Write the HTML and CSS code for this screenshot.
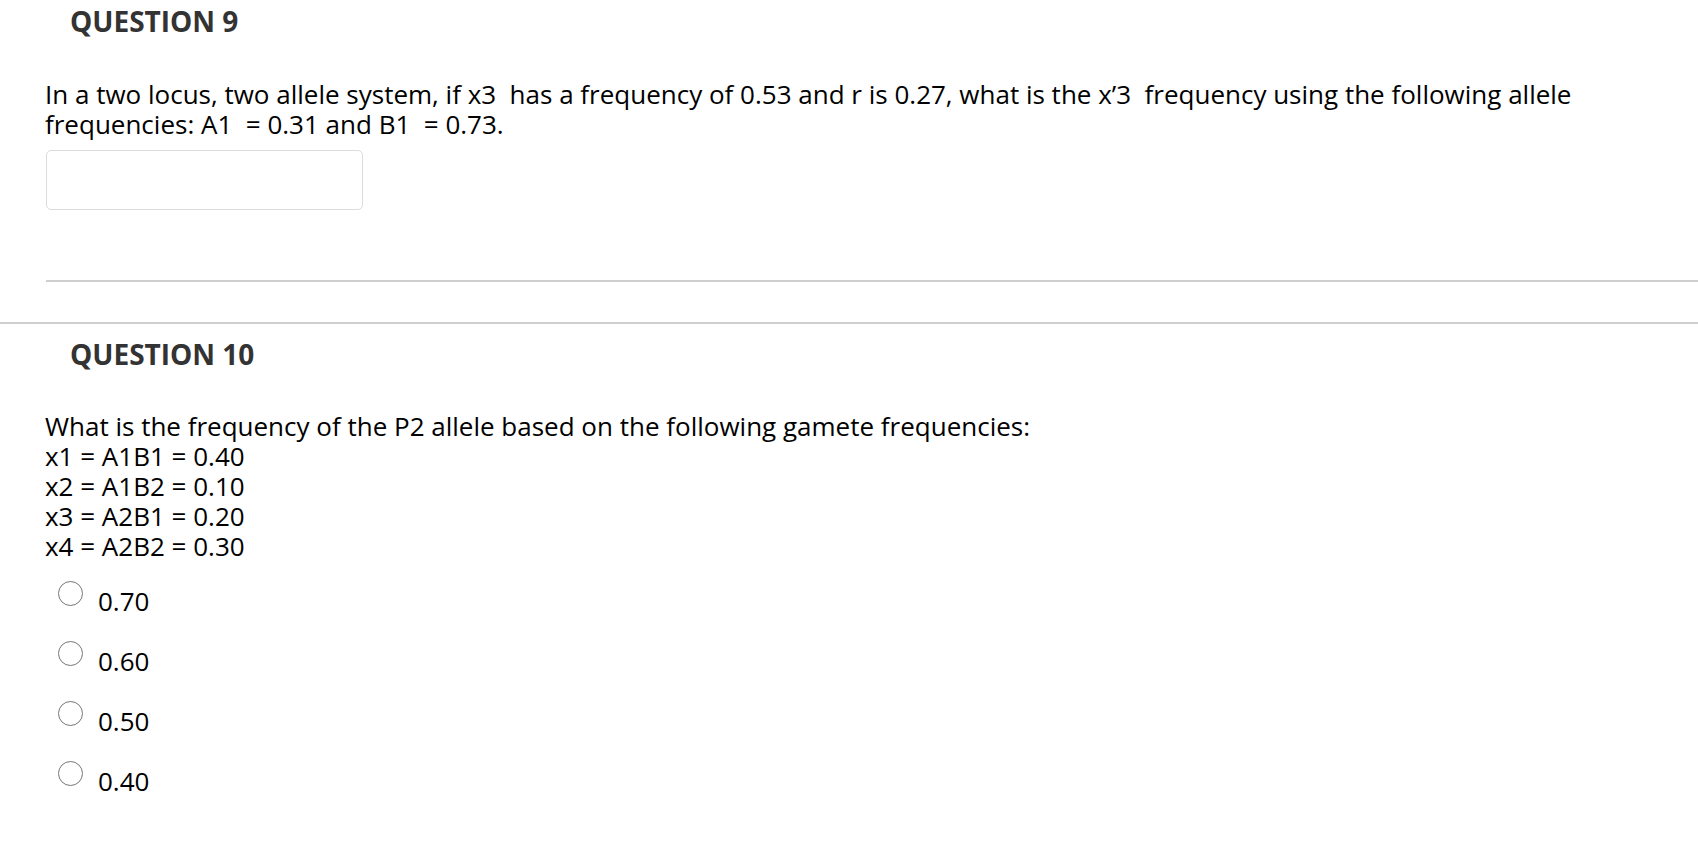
FILE: index.html
```html
<!DOCTYPE html>
<html>
<head>
<meta charset="utf-8">
<link rel="stylesheet" href="styles.css">
</head>
<body>
<div class="page">
  <section class="question q9">
    <h2 class="qtitle">QUESTION 9</h2>
    <div class="qtext">
      <p>In a two locus, two allele system, if x3&nbsp; has a frequency of 0.53 and r is 0.27, what is the x’3&nbsp; frequency using the following allele frequencies: A1&nbsp; = 0.31 and B1&nbsp; = 0.73.</p>
    </div>
    <div class="answer-box"></div>
    <div class="inner-rule"></div>
  </section>
  <div class="outer-rule"></div>
  <section class="question q10">
    <h2 class="qtitle">QUESTION 10</h2>
    <div class="qtext">
      <p>What is the frequency of the P2 allele based on the following gamete frequencies:</p>
      <p>x1 = A1B1 = 0.40</p>
      <p>x2 = A1B2 = 0.10</p>
      <p>x3 = A2B1 = 0.20</p>
      <p>x4 = A2B2 = 0.30</p>
    </div>
    <ul class="options">
      <li class="option"><span class="radio"></span><span class="label">0.70</span></li>
      <li class="option"><span class="radio"></span><span class="label">0.60</span></li>
      <li class="option"><span class="radio"></span><span class="label">0.50</span></li>
      <li class="option"><span class="radio"></span><span class="label">0.40</span></li>
    </ul>
  </section>
</div>
</body>
</html>
```
FILE: styles.css
```css
html, body {
  margin: 0;
  padding: 0;
  background: #fff;
}
body {
  font-family: "Open Sans", "Liberation Sans", sans-serif;
  color: #000;
}
.page {
  width: 1698px;
  min-height: 850px;
}
.question {
  display: flex;
  flex-direction: column;
}
.qtitle {
  margin: 0;
  padding-left: 70px;
  font-size: 28px;
  font-weight: 700;
  color: #333;
  line-height: 30px;
}
.q9 .qtitle {
  padding-top: 6px;
}
.q10 .qtitle {
  padding-top: 15px;
}
.qtext {
  padding-left: 45px;
  padding-right: 120px;
}
.qtext p {
  margin: 0;
  font-size: 26px;
  line-height: 30px;
}
.q9 .qtext {
  margin-top: 43px;
}
.q10 .qtext {
  margin-top: 42px;
}
.answer-box {
  margin-left: 46px;
  margin-top: 11px;
  width: 317px;
  height: 60px;
  border: 1px solid #dcdcdc;
  border-radius: 5px;
  box-sizing: border-box;
}
.inner-rule {
  margin-left: 46px;
  margin-top: 70px;
  height: 2px;
  background: #cfcfcf;
}
.outer-rule {
  margin-top: 40px;
  height: 2px;
  background: #cfcfcf;
}
.options {
  list-style: none;
  margin: 20px 0 0 0;
  padding: 0 0 0 58px;
  display: flex;
  flex-direction: column;
  gap: 25px;
}
.option {
  display: flex;
  align-items: flex-start;
  height: 35px;
}
.radio {
  width: 25px;
  height: 25px;
  box-sizing: border-box;
  border: 1.5px solid #777;
  border-radius: 50%;
  flex: none;
}
.label {
  margin-left: 15px;
  padding-top: 8px;
  font-size: 26px;
  line-height: 25px;
}
```
